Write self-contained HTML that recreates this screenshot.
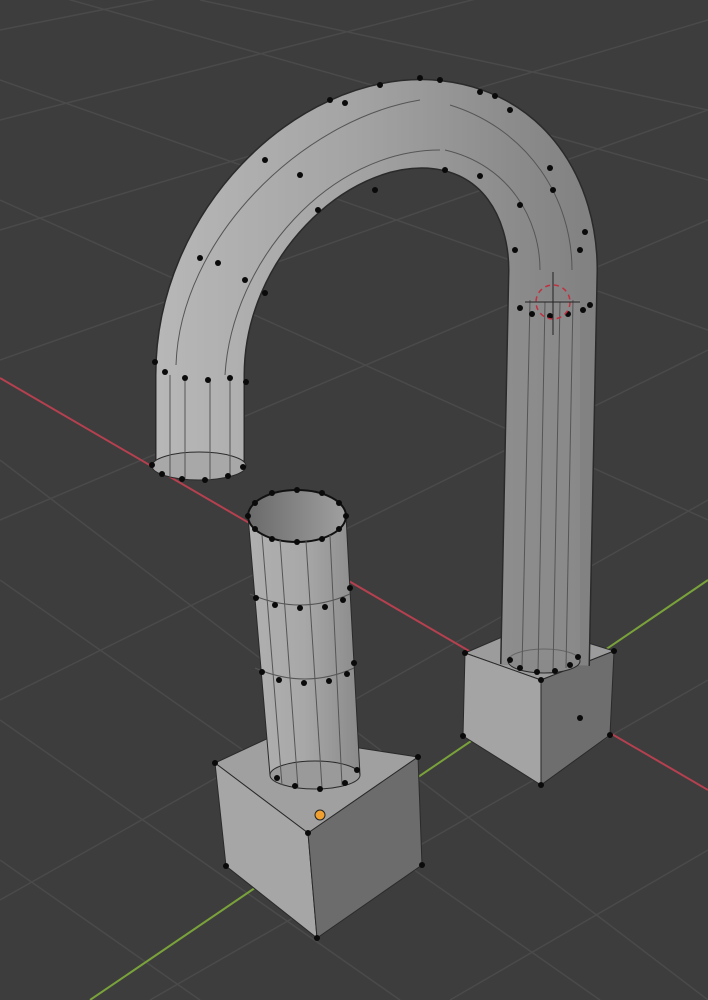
<!DOCTYPE html>
<html><head><meta charset="utf-8"><style>html,body{margin:0;padding:0;background:#3d3d3d;}svg{display:block}</style></head>
<body>
<svg width="708" height="1000" viewBox="0 0 708 1000" xmlns="http://www.w3.org/2000/svg">
<defs>
<linearGradient id="arch" gradientUnits="userSpaceOnUse" x1="150" y1="0" x2="600" y2="0">
<stop offset="0" stop-color="#b8b8b8"/><stop offset="0.45" stop-color="#a4a4a4"/><stop offset="0.8" stop-color="#8c8c8c"/><stop offset="1" stop-color="#808080"/></linearGradient>
<linearGradient id="tube" x1="0" y1="0" x2="1" y2="0">
<stop offset="0" stop-color="#b0b0b0"/><stop offset="0.5" stop-color="#a8a8a8"/><stop offset="1" stop-color="#8a8a8a"/></linearGradient>
<linearGradient id="inner" x1="0" y1="0" x2="1" y2="0">
<stop offset="0" stop-color="#6a6a6a"/><stop offset="1" stop-color="#a0a0a0"/></linearGradient>
</defs>
<rect width="708" height="1000" fill="#3d3d3d"/>
<g stroke="#4a4a4a" stroke-width="1.5" fill="none">
<line x1="0" y1="30" x2="708" y2="-110"/>
<line x1="0" y1="120" x2="708" y2="-60"/>
<line x1="0" y1="230" x2="708" y2="20"/>
<line x1="0" y1="360" x2="708" y2="110"/>
<line x1="0" y1="520" x2="708" y2="220"/>
<line x1="0" y1="700" x2="708" y2="350"/>
<line x1="0" y1="900" x2="708" y2="500"/>
<line x1="150" y1="1000" x2="708" y2="680"/>
<line x1="450" y1="1000" x2="708" y2="850"/>
<line x1="0" y1="-20" x2="708" y2="180"/>
<line x1="0" y1="80" x2="708" y2="330"/>
<line x1="0" y1="200" x2="708" y2="520"/>
<line x1="0" y1="460" x2="708" y2="1000"/>
<line x1="0" y1="580" x2="600" y2="1000"/>
<line x1="0" y1="720" x2="400" y2="1000"/>
<line x1="0" y1="860" x2="200" y2="1000"/>
<line x1="200" y1="0" x2="708" y2="110"/>
</g>
<line x1="0" y1="378" x2="708" y2="790" stroke="#b5404f" stroke-width="2"/>
<line x1="90" y1="1000" x2="708" y2="580" stroke="#7aa23a" stroke-width="2"/>

<!-- right cube -->
<polygon points="465,653 530,625 614,651 541,680" fill="#9c9c9c" stroke="#2a2a2a" stroke-width="1"/>
<polygon points="465,653 541,680 541,785 463,736" fill="#a4a4a4" stroke="#2a2a2a" stroke-width="1"/>
<polygon points="541,680 614,651 610,735 541,785" fill="#6e6e6e" stroke="#2a2a2a" stroke-width="1"/>

<!-- arch -->
<path d="M200,470 L200,375 C200,235 320,118 430,124 C515,130 553,200 553,270 L545,665" fill="none" stroke="#2a2a2a" stroke-width="90"/>
<path d="M200,470 L200,375 C200,235 320,118 430,124 C515,130 553,200 553,270 L545,665" fill="none" stroke="url(#arch)" stroke-width="87"/>
<ellipse cx="199" cy="466" rx="47" ry="14" fill="#a8a8a8" stroke="#2a2a2a"/>
<ellipse cx="544" cy="661" rx="36" ry="12" fill="#8a8a8a" stroke="#2a2a2a"/>
<rect x="510" y="300" width="70" height="360" fill="#8e8e8e" opacity="0.6"/>
<g stroke="#555" stroke-width="1" fill="none">
<line x1="170" y1="375" x2="170" y2="476"/><line x1="185" y1="378" x2="185" y2="479"/><line x1="210" y1="380" x2="210" y2="480"/><line x1="230" y1="380" x2="230" y2="476"/>
<line x1="530" y1="300" x2="522" y2="668"/><line x1="545" y1="302" x2="538" y2="672"/><line x1="560" y1="302" x2="553" y2="672"/><line x1="573" y1="300" x2="566" y2="668"/>
<path d="M176,365 C180,240 300,120 420,100"/><path d="M225,375 C232,260 330,150 440,150"/>
<path d="M450,105 C530,130 572,200 572,270"/><path d="M445,150 C510,165 540,220 540,270"/>
</g>

<!-- left cube -->
<polygon points="215,763 275,735 418,757 308,833" fill="#a0a0a0" stroke="#2a2a2a"/>
<polygon points="215,763 308,833 317,938 226,866" fill="#a6a6a6" stroke="#2a2a2a"/>
<polygon points="308,833 418,757 422,865 317,938" fill="#6c6c6c" stroke="#2a2a2a"/>

<!-- left tube -->
<polygon points="248,516 346,516 360,775 270,775" fill="url(#tube)" stroke="#2a2a2a"/>
<ellipse cx="315" cy="775" rx="45" ry="14" fill="#9a9a9a" stroke="#2a2a2a"/>
<ellipse cx="297" cy="516" rx="49" ry="26" fill="url(#inner)" stroke="#111" stroke-width="2"/>
<g stroke="#555" fill="none">
<line x1="262" y1="535" x2="282" y2="785"/><line x1="280" y1="540" x2="298" y2="788"/><line x1="306" y1="541" x2="322" y2="788"/><line x1="330" y1="535" x2="342" y2="785"/>
<path d="M250,594 Q300,616 350,594"/><path d="M255,668 Q305,690 354,668"/>
</g>

<g fill="#0a0a0a">
<circle cx="346" cy="516" r="3"/><circle cx="339" cy="529" r="3"/><circle cx="322" cy="539" r="3"/><circle cx="297" cy="542" r="3"/><circle cx="272" cy="539" r="3"/><circle cx="255" cy="529" r="3"/><circle cx="248" cy="516" r="3"/><circle cx="255" cy="503" r="3"/><circle cx="272" cy="493" r="3"/><circle cx="297" cy="490" r="3"/><circle cx="322" cy="493" r="3"/><circle cx="339" cy="503" r="3"/>
<circle cx="350" cy="588" r="3"/><circle cx="343" cy="600" r="3"/><circle cx="325" cy="607" r="3"/><circle cx="300" cy="608" r="3"/><circle cx="275" cy="605" r="3"/><circle cx="256" cy="598" r="3"/>
<circle cx="354" cy="663" r="3"/><circle cx="347" cy="674" r="3"/><circle cx="329" cy="681" r="3"/><circle cx="304" cy="683" r="3"/><circle cx="279" cy="680" r="3"/><circle cx="262" cy="672" r="3"/>
<circle cx="357" cy="770" r="3"/><circle cx="345" cy="783" r="3"/><circle cx="320" cy="789" r="3"/><circle cx="295" cy="786" r="3"/><circle cx="277" cy="778" r="3"/>
<circle cx="152" cy="465" r="3"/><circle cx="162" cy="474" r="3"/><circle cx="182" cy="479" r="3"/><circle cx="205" cy="480" r="3"/><circle cx="228" cy="476" r="3"/><circle cx="243" cy="467" r="3"/>
<circle cx="155" cy="362" r="3"/><circle cx="165" cy="372" r="3"/><circle cx="185" cy="378" r="3"/><circle cx="208" cy="380" r="3"/><circle cx="230" cy="378" r="3"/><circle cx="246" cy="382" r="3"/>
<circle cx="510" cy="660" r="3"/><circle cx="520" cy="668" r="3"/><circle cx="537" cy="672" r="3"/><circle cx="555" cy="671" r="3"/><circle cx="570" cy="665" r="3"/><circle cx="578" cy="657" r="3"/>
<circle cx="520" cy="308" r="3"/><circle cx="532" cy="314" r="3"/><circle cx="550" cy="316" r="3"/><circle cx="568" cy="314" r="3"/><circle cx="583" cy="310" r="3"/><circle cx="590" cy="305" r="3"/>
<circle cx="515" cy="250" r="3"/><circle cx="585" cy="232" r="3"/><circle cx="580" cy="250" r="3"/><circle cx="553" cy="190" r="3"/><circle cx="550" cy="168" r="3"/>
<circle cx="330" cy="100" r="3"/><circle cx="345" cy="103" r="3"/><circle cx="380" cy="85" r="3"/><circle cx="420" cy="78" r="3"/><circle cx="440" cy="80" r="3"/><circle cx="480" cy="92" r="3"/><circle cx="495" cy="96" r="3"/><circle cx="510" cy="110" r="3"/>
<circle cx="265" cy="160" r="3"/><circle cx="300" cy="175" r="3"/><circle cx="318" cy="210" r="3"/><circle cx="375" cy="190" r="3"/><circle cx="445" cy="170" r="3"/><circle cx="480" cy="176" r="3"/><circle cx="520" cy="205" r="3"/>
<circle cx="200" cy="258" r="3"/><circle cx="218" cy="263" r="3"/><circle cx="245" cy="280" r="3"/><circle cx="265" cy="293" r="3"/>
<circle cx="215" cy="763" r="3"/><circle cx="308" cy="833" r="3"/><circle cx="418" cy="757" r="3"/><circle cx="226" cy="866" r="3"/><circle cx="317" cy="938" r="3"/><circle cx="422" cy="865" r="3"/>
<circle cx="465" cy="653" r="3"/><circle cx="614" cy="651" r="3"/><circle cx="541" cy="680" r="3"/><circle cx="463" cy="736" r="3"/><circle cx="541" cy="785" r="3"/><circle cx="610" cy="735" r="3"/><circle cx="580" cy="718" r="3"/>
</g>
<circle cx="320" cy="815" r="5" fill="#f0a030" stroke="#222"/>
<g stroke="#c03040" stroke-width="1.5" fill="none">
<circle cx="553" cy="302" r="17" stroke-dasharray="5 4"/>
</g>
<g stroke="#222" stroke-width="1"><line x1="553" y1="272" x2="553" y2="335"/><line x1="525" y1="302" x2="580" y2="302"/></g>
</svg>
</body></html>
